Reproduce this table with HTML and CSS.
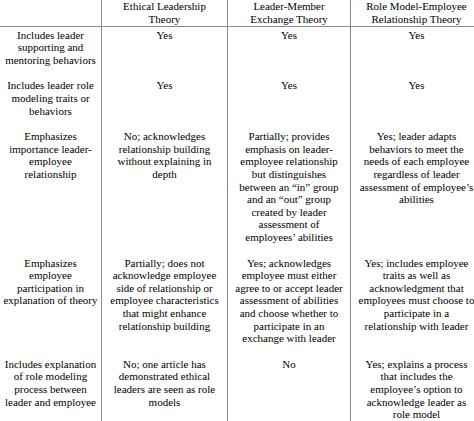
FILE: index.html
```html
<!DOCTYPE html>
<html lang="en">
<head>
<meta charset="utf-8">
<title>Leadership theories comparison</title>
<link rel="stylesheet" href="styles.css">
</head>
<body>
<div class="table">
  <div class="cell head c1"></div>
  <div class="cell head c2">Ethical Leadership Theory</div>
  <div class="cell head c3">Leader-Member Exchange Theory</div>
  <div class="cell head c4">Role Model-Employee Relationship Theory</div>

  <div class="cell c1">Includes leader supporting and mentoring behaviors</div>
  <div class="cell c2">Yes</div>
  <div class="cell c3">Yes</div>
  <div class="cell c4">Yes</div>

  <div class="cell c1">Includes leader role modeling traits or behaviors</div>
  <div class="cell c2">Yes</div>
  <div class="cell c3">Yes</div>
  <div class="cell c4">Yes</div>

  <div class="cell c1">Emphasizes importance leader-employee relationship</div>
  <div class="cell c2">No; acknowledges relationship building without explaining in depth</div>
  <div class="cell c3">Partially; provides emphasis on leader-employee relationship but distinguishes between an “in” group and an “out” group created by leader assessment of employees’ abilities</div>
  <div class="cell c4">Yes; leader adapts behaviors to meet the needs of each employee regardless of leader assessment of employee’s abilities</div>

  <div class="cell c1">Emphasizes employee participation in explanation of theory</div>
  <div class="cell c2">Partially; does not acknowledge employee side of relationship or employee characteristics that might enhance relationship building</div>
  <div class="cell c3">Yes; acknowledges employee must either agree to or accept leader assessment of abilities and choose whether to participate in an exchange with leader</div>
  <div class="cell c4">Yes; includes employee traits as well as acknowledgment that employees must choose to participate in a relationship with leader</div>

  <div class="cell c1">Includes explanation of role modeling process between leader and employee</div>
  <div class="cell c2">No; one article has demonstrated ethical leaders are seen as role models</div>
  <div class="cell c3">No</div>
  <div class="cell c4">Yes; explains a process that includes the employee’s option to acknowledge leader as role model</div>
</div>
</body>
</html>
```

FILE: styles.css
```css
html, body {
  margin: 0;
  padding: 0;
  background: #ffffff;
  overflow: hidden;
}

.table {
  display: grid;
  grid-template-columns: 101px 126px 123px 132px;
  width: 482px;
  font-family: "Liberation Serif", "Times New Roman", serif;
  font-size: 11px;
  line-height: 12.6px;
  color: #000000;
  text-align: center;
}

.cell {
  box-sizing: border-box;
  padding-top: 1.5px;
  padding-bottom: 11.5px;
}

.cell.head {
  padding-top: 0;
  padding-bottom: 1px;
  border-bottom: 1px solid #8a8a8a;
}

.c1 {
  padding-left: 2.5px;
  padding-right: 2.5px;
}

.c2 {
  border-left: 1px solid #8a8a8a;
  padding-left: 4.5px;
  padding-right: 4.5px;
}

.c3 {
  border-left: 1px solid #8a8a8a;
  padding-left: 5.5px;
  padding-right: 5.5px;
}

.c4 {
  border-left: 1px solid #8a8a8a;
  padding-left: 7px;
  padding-right: 7px;
}
```
